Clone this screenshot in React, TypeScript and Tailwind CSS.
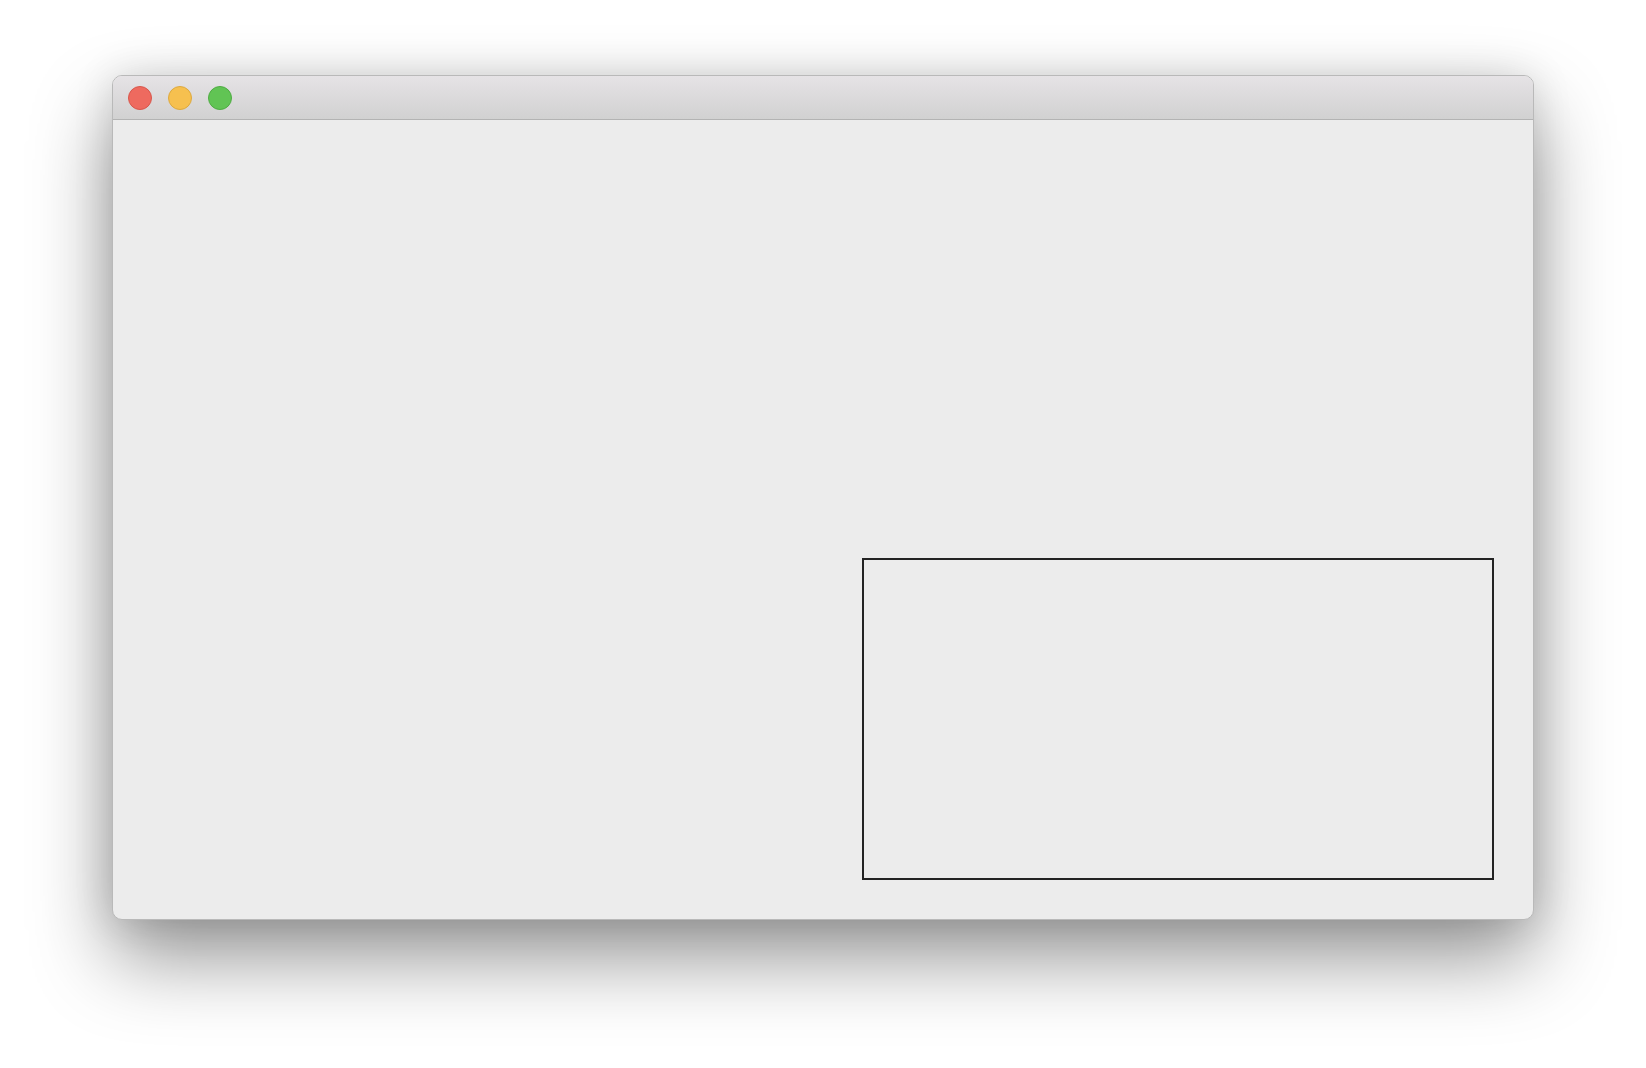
import React from 'react';

function TrafficLight({ color, ring }: { color: string; ring: string }) {
  return <span className={`block w-[24px] h-[24px] rounded-full border ${color} ${ring}`} />;
}

export default function App() {
  return (
    <div className="w-[1646px] h-[1068px] bg-white pt-[75px] pl-[112px] overflow-hidden">
      {/* Window */}
      <div className="w-[1422px] h-[845px] rounded-[10px] bg-[#ececec] border border-[#b9b9b9] flex flex-col overflow-hidden shadow-[0_38px_80px_rgba(0,0,0,0.42),0_0_40px_rgba(0,0,0,0.12)]">
        {/* Title bar */}
        <div className="h-[44px] shrink-0 flex items-center gap-[16px] pl-[15px] border-b border-[#b3b3b3] bg-gradient-to-b from-[#e6e3e6] to-[#d1d1d1]">
          <TrafficLight color="bg-[#ee6a5f]" ring="border-[#d8574c]" />
          <TrafficLight color="bg-[#f6c04f]" ring="border-[#dda93f]" />
          <TrafficLight color="bg-[#61c454]" ring="border-[#4fac43]" />
        </div>

        {/* Content */}
        <div className="flex-1 flex items-end justify-end pr-[39px] pb-[39px]">
          <div className="w-[632px] h-[322px] border-2 border-[#232323]" />
        </div>
      </div>
    </div>
  );
}
